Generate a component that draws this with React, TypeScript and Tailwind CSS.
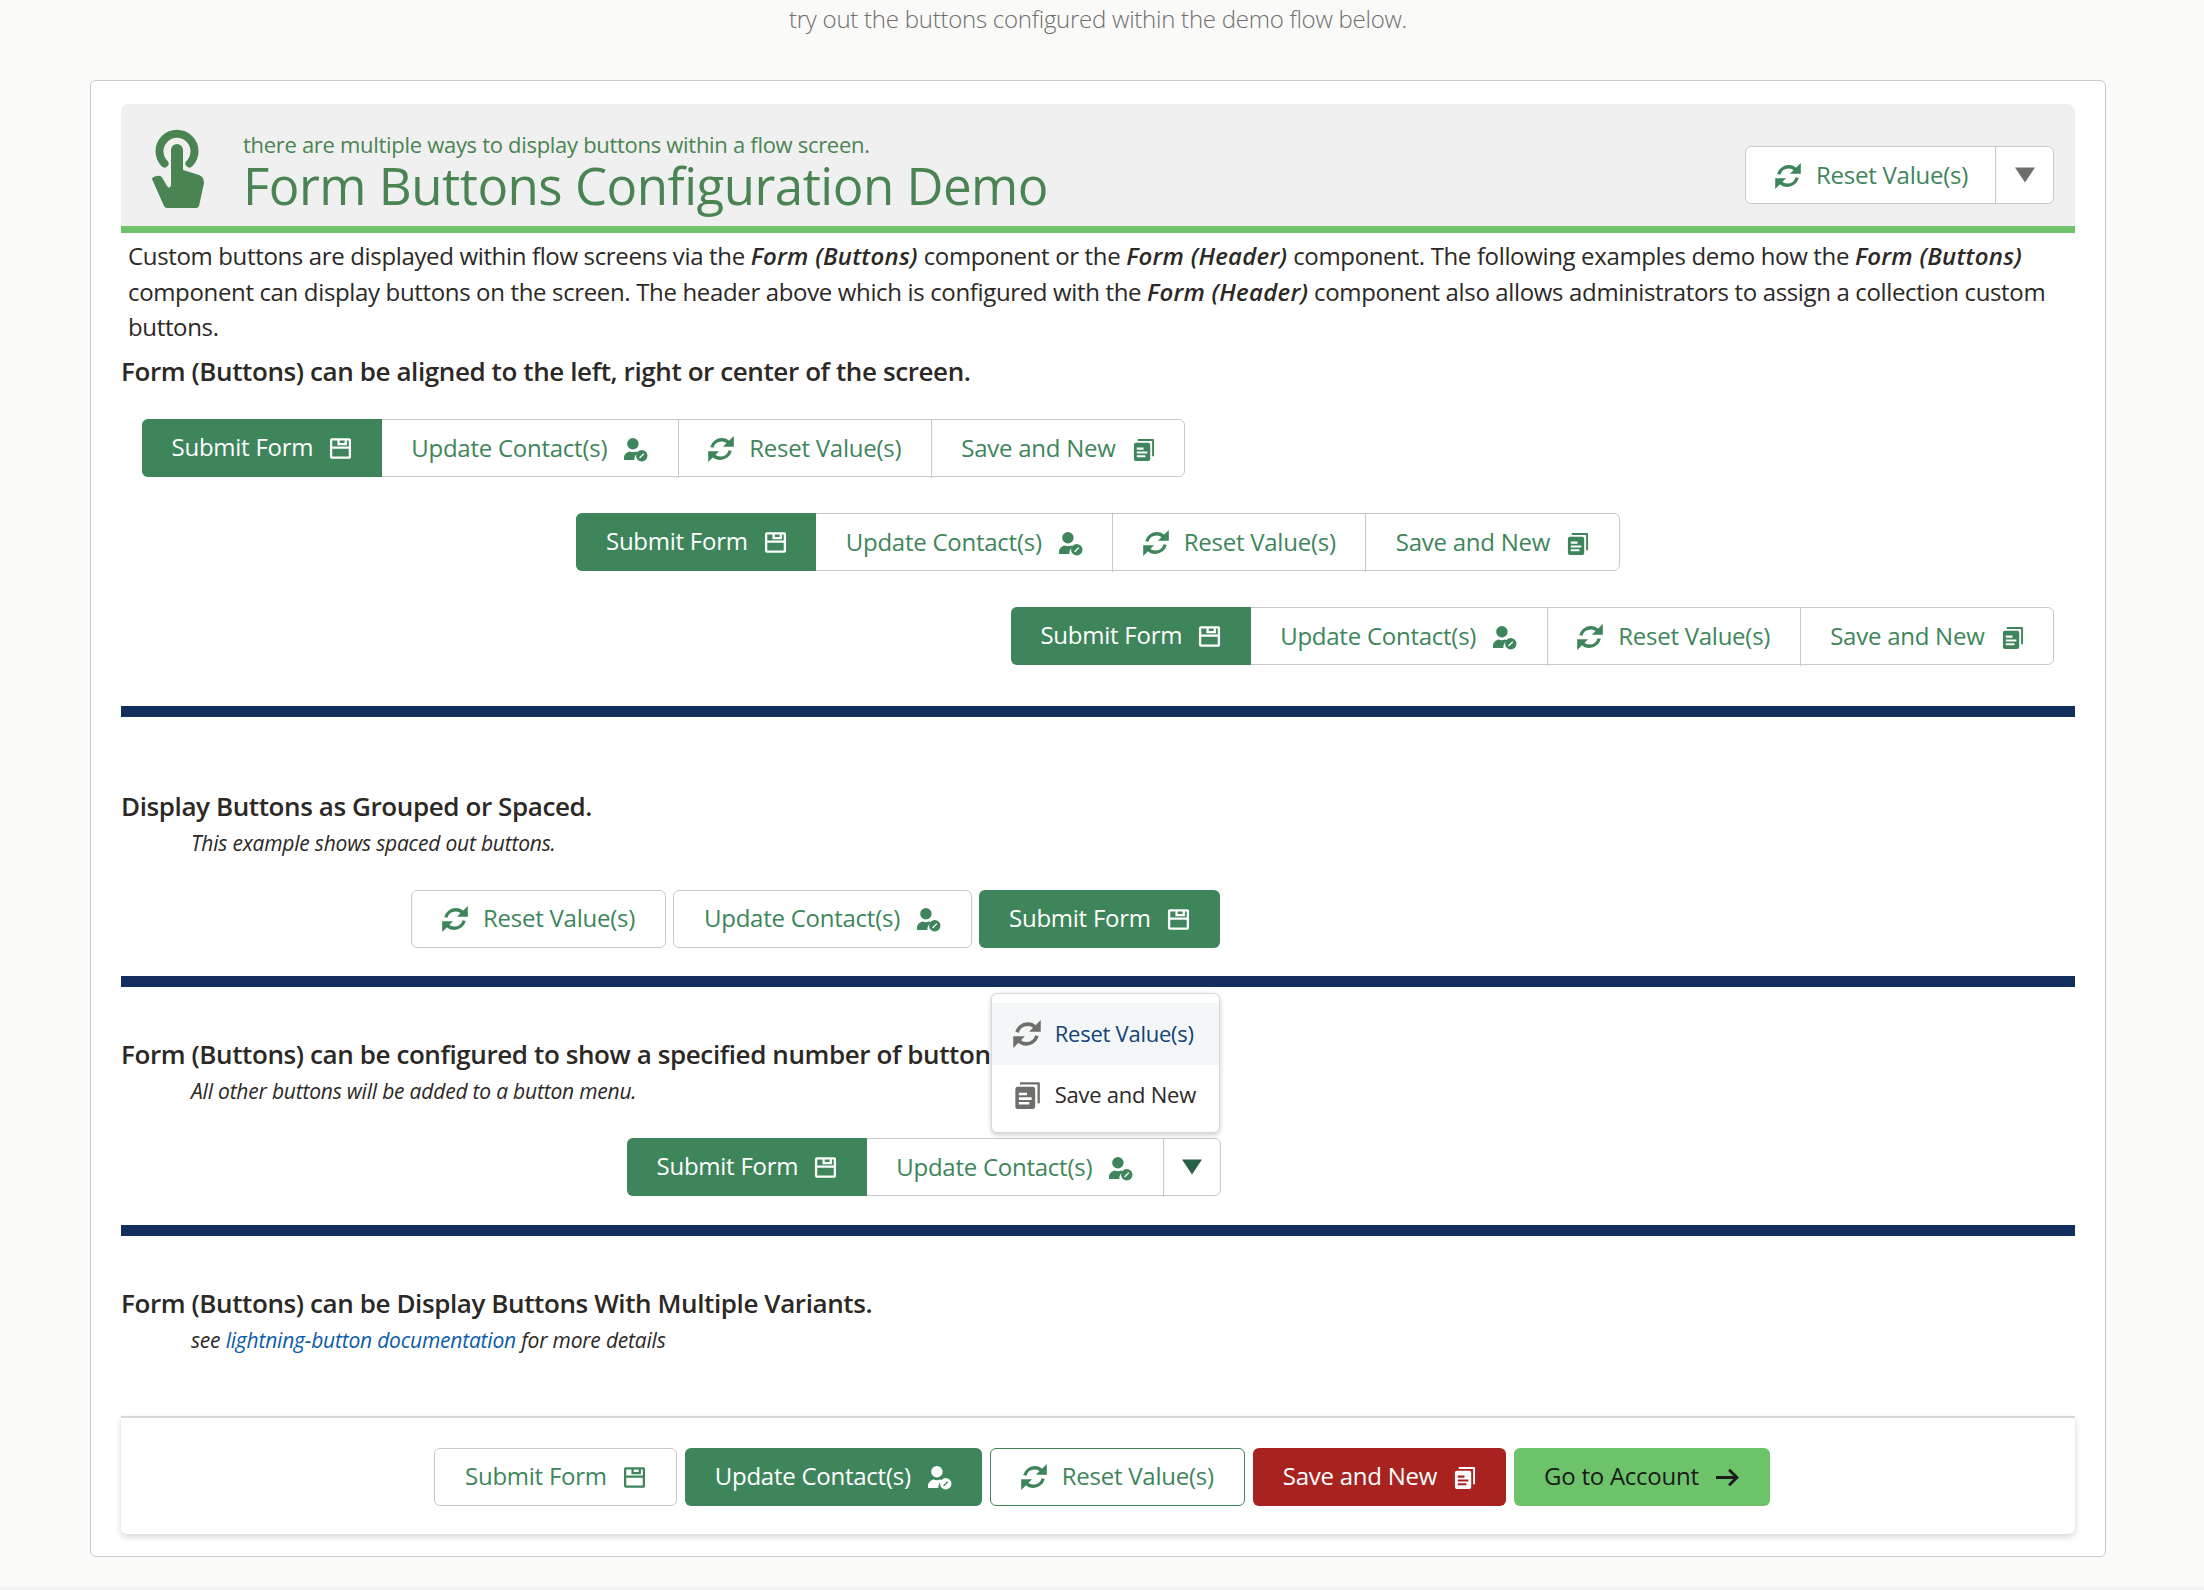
import type { ReactNode } from 'react';

function SaveIcon() {
  return (
    <svg viewBox="0 0 24 24" className="w-[23px] h-[23px] mt-[2px] shrink-0" fill="none" stroke="currentColor" strokeWidth="2.4">
      <path d="M3 2.500h18a.8.8 0 0 1 .8.8v17.400a.8.8 0 0 1-.8.8H3a.8.8 0 0 1-.8-.8V3.300a.8.8 0 0 1 .8-.8z" strokeLinejoin="round" />
      <path d="M2.500 11h19M10 3v4.500h7.500V3" />
    </svg>
  );
}

function UserIcon() {
  return (
    <svg viewBox="0 0 24 24" className="w-[25px] h-[25px] mt-[1px] shrink-0" fill="currentColor">
      <circle cx="9.500" cy="6.500" r="5.500" />
      <path d="M1 22v-2.500c0-3 2.800-5 5.500-5.700 1.800 1 4.200 1 6 0 .8.200 1.500.5 2.200 1A7.500 7.500 0 0 0 11 22z" />
      <path fillRule="evenodd" d="M18 12.500a5.500 5.500 0 1 1 0 11 5.500 5.500 0 0 1 0-11zM19.600 15.500l-3.700 3.700-.4 1.300 1.300-.4 3.700-3.700z" />
    </svg>
  );
}

function RefreshIcon({ className = 'w-[26px] h-[26px] mt-[1px]' }: { className?: string }) {
  return (
    <svg viewBox="0 0 24 24" className={`${className} shrink-0`} fill="none" stroke="currentColor" strokeWidth="3.100">
      <path d="M3.500 10.500C4.700 6 8.700 3.500 12.800 3.500c2.500 0 4.500 1 6 2.500" />
      <path d="M23.800 0v10H13.800z" fill="currentColor" stroke="none" />
      <path d="M20.500 13.500C19.300 18 15.300 20.500 11.200 20.500c-2.500 0-4.500-1-6-2.500" />
      <path d="M.2 24V14h10z" fill="currentColor" stroke="none" />
    </svg>
  );
}

function CopyIcon({ className = 'w-[23px] h-[23px] mt-[1px]' }: { className?: string }) {
  return (
    <svg viewBox="0 0 24 24" className={`${className} shrink-0`} fill="currentColor">
      <path fillRule="evenodd" d="M4 5h13a2 2 0 0 1 2 2v15a2 2 0 0 1-2 2H4a2 2 0 0 1-2-2V7a2 2 0 0 1 2-2zM5 10v2.200h7V10zM5 14v2.200h11V14zM5 18v2.200h9V18z" />
      <path d="M6 1h16a1 1 0 0 1 1 1v17h-2V3H6z" />
    </svg>
  );
}

function ArrowIcon() {
  return (
    <svg viewBox="0 0 24 24" className="w-[25px] h-[25px] mt-[1px] shrink-0" fill="none" stroke="currentColor" strokeWidth="2.800">
      <path d="M1 12h20M13.500 4.500 21 12l-7.500 7.500" />
    </svg>
  );
}

function Caret({ className }: { className: string }) {
  return (
    <svg viewBox="0 0 20 16" className={`w-[20px] h-[16px] ${className}`} fill="currentColor">
      <path d="M0 .5h20L10 15.500z" />
    </svg>
  );
}

function HandIcon() {
  return (
    <svg viewBox="0 0 52 82" className="w-[52px] h-[82px] mt-[8px] text-[#4a8452]" fill="currentColor">
      <path d="M12.500 35.500A17.500 17.500 0 1 1 37.500 35.500" fill="none" stroke="currentColor" strokeWidth="8" strokeLinecap="round" />
      <path d="M19 22a6 6 0 0 1 12 0v20l16 5q5 2 5 8l-5 23q-.5 2-3 2H15q-2 0-3-2L0 51q0-2 5-3 4-1 6 3l4 7q3 4 4-1z" />
    </svg>
  );
}

const save = <SaveIcon />;
const user = <UserIcon />;
const refresh = <RefreshIcon />;
const copy = <CopyIcon />;

function GroupButton({ label, icon, left, first, last }: { label: string; icon: ReactNode; left?: boolean; first?: boolean; last?: boolean }) {
  const tone = first
    ? 'bg-[#3e855b] text-white rounded-l-[6px] -my-px -ml-px'
    : 'text-[#3e855b] border-r border-[#c9c9c9]';
  return (
    <div className={`h-[58px] flex items-center px-[29.5px] ${left ? 'gap-[15px]' : 'gap-[16px]'} ${last ? 'border-r-0' : ''} ${tone}`}>
      {left && icon}
      <span className="-mt-px">{label}</span>
      {!left && icon}
    </div>
  );
}

function FullGroup({ className }: { className: string }) {
  return (
    <div className={`flex w-fit h-[58px] bg-white border border-[#c9c9c9] rounded-[6px] ${className}`}>
      <GroupButton first label="Submit Form" icon={save} />
      <GroupButton label="Update Contact(s)" icon={user} />
      <GroupButton left label="Reset Value(s)" icon={refresh} />
      <GroupButton last label="Save and New" icon={copy} />
    </div>
  );
}

function Solo({ label, icon, left, tone }: { label: string; icon: ReactNode; left?: boolean; tone: string }) {
  return (
    <div className={`h-[58px] flex items-center px-[30px] rounded-[6px] ${left ? 'gap-[15px]' : 'gap-[16px]'} ${tone}`}>
      {left && icon}
      <span className="-mt-px">{label}</span>
      {!left && icon}
    </div>
  );
}

function Heading({ children, className = '' }: { children: ReactNode; className?: string }) {
  return <div className={`text-[26px] leading-[36px] font-semibold text-[#2b2826] tracking-[-0.4px] whitespace-nowrap ${className}`}>{children}</div>;
}

function Note({ children }: { children: ReactNode }) {
  return <div className="mt-[5px] ml-[70px] text-[21px] leading-[28px] italic text-[#2b2826] tracking-[-0.2px]">{children}</div>;
}

function Rule({ className }: { className: string }) {
  return <div className={`h-[11px] bg-[#122e5c] ${className}`} />;
}

function Term({ children }: { children: ReactNode }) {
  return <b className="italic font-semibold tracking-[0.25px]">{children}</b>;
}

export default function App() {
  return (
    <div className="relative h-[1590px] overflow-hidden bg-[#fafaf9] pl-[90px] pr-[98px] text-[24px] text-[#2b2826] [font-family:'Open_Sans',sans-serif] tracking-[-0.25px]">
      <div className="h-[80px] pt-[3px] text-center leading-[32px] font-light text-[#706e6b]">try out the buttons configured within the demo flow below.</div>

      <div className="bg-white border border-[#c9c9c9] rounded-[6px] h-[1477px] px-[30px] pt-[23px]">
        <div className="h-[129px] bg-[#f0f0f0] rounded-t-[8px] border-b-[7px] border-[#6cc36a] flex items-center pl-[31px] pr-[21px]">
          <HandIcon />
          <div className="ml-[39px] mt-[14px] flex-1 text-[#4a8452]">
            <div className="text-[22px] leading-[26px] tracking-[-0.3px]">there are multiple ways to display buttons within a flow screen.</div>
            <div className="text-[51px] leading-[56px] tracking-[-0.5px]">Form Buttons Configuration Demo</div>
          </div>
          <div className="mt-[20px] h-[58px] flex bg-white border border-[#c9c9c9] rounded-[6px] text-[#3e855b]">
            <div className="flex items-center gap-[15px] pl-[29px] pr-[27px] border-r border-[#c9c9c9]">
              {refresh}
              <span className="-mt-px">Reset Value(s)</span>
            </div>
            <div className="w-[57px] flex items-center justify-center">
              <Caret className="text-[#706e6b]" />
            </div>
          </div>
        </div>

        <div className="px-[7px] pt-[5px] leading-[35.5px] tracking-[-0.35px]">
          Custom buttons are displayed within flow screens via the <Term>Form (Buttons)</Term> component or the <Term>Form (Header)</Term> component. The following examples demo how the <Term>Form (Buttons)</Term> component can display buttons on the screen. The header above which is configured with the <Term>Form (Header)</Term> component also allows administrators to assign a collection custom buttons.
        </div>
        <Heading className="mt-[8px]">Form (Buttons) can be aligned to the left, right or center of the screen.</Heading>

        <FullGroup className="mt-[30px] ml-[21px]" />
        <FullGroup className="mt-[36px] mx-auto" />
        <FullGroup className="mt-[36px] ml-auto mr-[21px]" />

        <Rule className="mt-[41px]" />

        <Heading className="mt-[71px]">Display Buttons as Grouped or Spaced.</Heading>
        <Note>This example shows spaced out buttons.</Note>
        <div className="mt-[33px] ml-[290px] flex gap-[7px]">
          <Solo left label="Reset Value(s)" icon={refresh} tone="bg-white border border-[#c9c9c9] text-[#3e855b]" />
          <Solo label="Update Contact(s)" icon={user} tone="bg-white border border-[#c9c9c9] text-[#3e855b]" />
          <Solo label="Submit Form" icon={save} tone="bg-[#3e855b] text-white" />
        </div>

        <Rule className="mt-[28px]" />

        <Heading className="mt-[49px]">Form (Buttons) can be configured to show a specified number of buttons.</Heading>
        <Note>All other buttons will be added to a button menu.</Note>
        <div className="relative mt-[33px] ml-[506px] w-fit flex h-[58px] bg-white border border-[#c9c9c9] rounded-[6px]">
          <GroupButton first label="Submit Form" icon={save} />
          <GroupButton label="Update Contact(s)" icon={user} />
          <div className="w-[56px] flex items-center justify-center">
            <Caret className="text-[#2b5f43]" />
          </div>
          <div className="absolute right-0 bottom-[62px] w-[229px] h-[140px] pt-[9px] bg-white border border-[#d8d8d8] rounded-[6px] shadow-[0_2px_5px_rgba(0,0,0,0.2)] text-[22px] whitespace-nowrap">
            <div className="h-[62px] flex items-center gap-[14px] px-[21px] bg-[#f3f7f7] text-[#124277]">
              <RefreshIcon className="w-[28px] h-[28px] text-[#706e6b]" />
              <span>Reset Value(s)</span>
            </div>
            <div className="h-[60px] flex items-center gap-[14px] px-[21px]">
              <CopyIcon className="w-[28px] h-[28px] text-[#706e6b]" />
              <span>Save and New</span>
            </div>
          </div>
        </div>

        <Rule className="mt-[29px]" />

        <Heading className="mt-[49px]">Form (Buttons) can be Display Buttons With Multiple Variants.</Heading>
        <Note>
          see <span className="text-[#0b5cab]">lightning-button documentation</span> for more details
        </Note>

        <div className="mt-[62px] h-[118px] border-t-2 border-[#d8d8d8] rounded-b-[6px] shadow-[0_3px_6px_rgba(0,0,0,0.16)] pt-[30px] pl-[313px] flex gap-[8px]">
          <Solo label="Submit Form" icon={save} tone="bg-white border border-[#c9c9c9] text-[#3e855b]" />
          <Solo label="Update Contact(s)" icon={user} tone="bg-[#3e855b] text-white" />
          <Solo left label="Reset Value(s)" icon={refresh} tone="bg-white border border-[#3e855b] text-[#3e855b]" />
          <Solo label="Save and New" icon={copy} tone="bg-[#a82320] text-white" />
          <Solo label="Go to Account" icon={<ArrowIcon />} tone="bg-[#6cc36a] text-[#1a1a1a]" />
        </div>
      </div>

      <div className="absolute left-0 right-0 bottom-0 h-[3px] bg-[#f3f3f3]" />
    </div>
  );
}
